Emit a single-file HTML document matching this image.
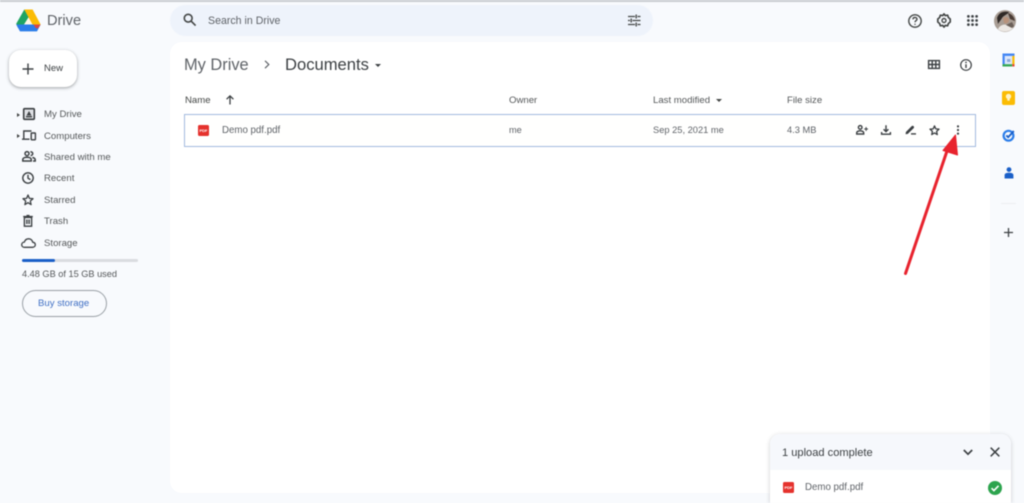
<!DOCTYPE html>
<html style="overflow:hidden;height:503px"><head><meta charset="utf-8"><style>
html,body{margin:0;padding:0}
body{width:1024px;height:503px;overflow:hidden;background:#f8fafd;position:relative;font-family:"Liberation Sans",sans-serif;color:#55585a}
#w{position:absolute;left:0;top:0;width:1024px;height:503px;overflow:hidden;filter:blur(.45px)}
.t{position:absolute;white-space:nowrap;line-height:14px;font-size:9.6px}
.a{position:absolute}
svg{position:absolute;overflow:visible}
</style></head><body><div id="w">
<div class="a" style="left:0;top:0;width:1024px;height:1.5px;background:#c9ccd0"></div>

<!-- logo -->
<svg style="left:16px;top:9px" width="25" height="23" viewBox="0 0 25 23">
<path d="M8.3 0.5 0.2 14.8 2 19 8 15.5 13 7.8Z" fill="#1fa463"/>
<path d="M8.3 0.5H16.6L24.6 15.5H16.4Z" fill="#fbbc04"/>
<path d="M0.2 15.5H24.6L21 22.4H4Z" fill="#2b7de9"/>
<path d="M17.5 15.5H24.6L22 19.5 19.6 19Z" fill="#ea4335" opacity=".9"/>
<path d="M12.4 8.5 16.2 15.2H8.4Z" fill="#fff8e6"/>
</svg>
<div class="t" style="left:47px;top:12px;font-size:14.6px;line-height:18px;color:#5f6368">Drive</div>

<!-- search -->
<div class="a" style="left:170px;top:5px;width:483px;height:31px;border-radius:16px;background:#eef3fb"></div>
<svg style="left:183px;top:13px" width="14" height="14" viewBox="0 0 14 14" fill="none" stroke="#444746" stroke-width="1.6"><circle cx="5.2" cy="5.2" r="3.9"/><path d="M8.2 8.2 12.6 12.6"/></svg>
<div class="t" style="left:208px;top:14px;font-size:10.6px;color:#5f6368">Search in Drive</div>
<svg style="left:627px;top:14px" width="14" height="13" viewBox="0 0 14 13" fill="none" stroke="#444746" stroke-width="1.3"><path d="M1 2.5H8M10.5 2.5H13.5M9.2 .5V4.5M1 6.5H3M5.5 6.5H13.5M4.2 4.5V8.5M1 10.5H8M10.5 10.5H13.5M9.2 8.5V12.5"/></svg>

<!-- top right -->
<svg style="left:908px;top:14px" width="14" height="14" viewBox="0 0 14 14" fill="none" stroke="#444746" stroke-width="1.4"><circle cx="7" cy="7" r="6.2"/><path d="M5 5.4C5 4 6 3.4 7 3.4S9 4.1 9 5.2C9 6.6 7 6.6 7 8.3"/><circle cx="7" cy="10.3" r=".7" fill="#444746" stroke="none"/></svg>
<svg style="left:937px;top:13px" width="14" height="15" viewBox="0 0 14 15" fill="none" stroke="#444746" stroke-width="1.7"><path d="M7 .9 8.3 2.6 10.6 2.2 11.4 4.5 13.2 6 13.2 9 11.4 10.5 10.6 12.8 8.3 12.4 7 14.1 5.7 12.4 3.4 12.8 2.6 10.5.8 9 .8 6 2.6 4.5 3.4 2.2 5.7 2.6Z" stroke-linejoin="round"/><circle cx="7" cy="7.5" r="2" stroke-width="1.4"/></svg>
<svg style="left:967px;top:15px" width="11" height="11" viewBox="0 0 11 11" fill="#3c4043"><circle cx="1.4" cy="1.4" r="1.35"/><circle cx="5.5" cy="1.4" r="1.35"/><circle cx="9.6" cy="1.4" r="1.35"/><circle cx="1.4" cy="5.5" r="1.35"/><circle cx="5.5" cy="5.5" r="1.35"/><circle cx="9.6" cy="5.5" r="1.35"/><circle cx="1.4" cy="9.6" r="1.35"/><circle cx="5.5" cy="9.6" r="1.35"/><circle cx="9.6" cy="9.6" r="1.35"/></svg>
<svg style="left:994px;top:10px" width="22" height="22" viewBox="0 0 22 22"><circle cx="11" cy="11" r="11" fill="#a89d94"/><path d="M3 8C5 2 10 1 15 2 13 5 10 5 8 8 7 10 5 12 4 14Z" fill="#2f2926"/><path d="M9 8C11 6 15 7 15 10 15 13 12 14 10 13Z" fill="#b8937c"/><path d="M14 3C17 4 20 6 21 11L16 9Z" fill="#4a3b34"/><path d="M4 19C6 15 10 14 13 15 17 16 19 18 19 18 16 22 8 23 4 19Z" fill="#ece8e4"/><path d="M12 15 18 12 20 16 18 18Z" fill="#6b6059"/></svg>

<!-- New -->
<div class="a" style="left:9px;top:50px;width:68px;height:37px;border-radius:12px;background:#fff;box-shadow:0 1px 2px rgba(60,64,67,.3),0 1px 3px 1px rgba(60,64,67,.15)"></div>
<svg style="left:22px;top:63px" width="12" height="12" viewBox="0 0 12 12" stroke="#3c4043" stroke-width="1.4"><path d="M6 .5V11.5M.5 6H11.5"/></svg>
<div class="t" style="left:44px;top:62px;font-size:9.5px;color:#3c4043">New</div>

<!-- nav -->
<div class="a" style="left:16.5px;top:113px;width:0;height:0;border-left:3px solid #444746;border-top:2.2px solid transparent;border-bottom:2.2px solid transparent"></div>
<div class="a" style="left:16.5px;top:134px;width:0;height:0;border-left:3px solid #444746;border-top:2.2px solid transparent;border-bottom:2.2px solid transparent"></div>
<svg style="left:23px;top:108px" width="12" height="12" viewBox="0 0 12 12"><rect x=".7" y=".7" width="10.6" height="10.6" rx="1" fill="#dfe1e5" stroke="#3c4043" stroke-width="1.6"/><path d="M6 3 8.5 7.5H3.5Z" fill="#3c4043"/><rect x="3" y="8" width="6" height="1.4" fill="#3c4043"/></svg>
<div class="t" style="left:44px;top:108px">My Drive</div>
<svg style="left:22px;top:130px" width="14" height="11" viewBox="0 0 14 11" fill="none" stroke="#3c4043" stroke-width="1.4"><path d="M1.8 8.5V1H9.5M0 9.2H7.5"/><rect x="9.2" y="3" width="4.2" height="6.8" rx=".5"/></svg>
<div class="t" style="left:44px;top:130px">Computers</div>
<svg style="left:22px;top:151px" width="14" height="11" viewBox="0 0 14 11" fill="none" stroke="#3c4043" stroke-width="1.5"><circle cx="5" cy="2.6" r="2"/><path d="M.8 10V8.6C.8 7 3 6.3 5 6.3S9.2 7 9.2 8.6V10H.8Z"/><path d="M8.4 .7C10 .7 10.7 1.7 10.7 2.6S10 4.5 8.6 4.6M10.4 6.5C12 6.8 13.2 7.5 13.2 8.8V10H11"/></svg>
<div class="t" style="left:44px;top:151px">Shared with me</div>
<svg style="left:22px;top:172px" width="12" height="12" viewBox="0 0 12 12" fill="none" stroke="#3c4043" stroke-width="1.4"><circle cx="6" cy="6" r="5.2"/><path d="M6 2.8V6.2L8.4 7.6"/></svg>
<div class="t" style="left:44px;top:172px">Recent</div>
<svg style="left:22px;top:194px" width="12" height="12" viewBox="0 0 12 12" fill="none" stroke="#3c4043" stroke-width="1.3"><path d="M6 1 7.4 4.4 11 4.7 8.3 7 9.1 10.6 6 8.7 2.9 10.6 3.7 7 1 4.7 4.6 4.4Z" stroke-linejoin="round"/></svg>
<div class="t" style="left:44px;top:194px">Starred</div>
<svg style="left:23px;top:215px" width="10" height="12" viewBox="0 0 10 12" fill="none" stroke="#3c4043" stroke-width="1.4"><path d="M1.4 2.4H8.6V11.2H1.4ZM.2 1.6H9.8M3.5.6H6.5M3.9 4.5V9M6.1 4.5V9"/></svg>
<div class="t" style="left:44px;top:215px">Trash</div>
<svg style="left:21px;top:238px" width="15" height="10" viewBox="0 0 15 10" fill="none" stroke="#3c4043" stroke-width="1.3"><path d="M3.6 9.3C1.8 9.3.7 8.1.7 6.7S1.8 4.2 3.3 4.1C4 2 5.6.8 7.6.8 9.8.8 11.3 2.3 11.7 4.2 13.2 4.4 14.3 5.4 14.3 6.8S13.1 9.3 11.6 9.3Z"/></svg>
<div class="t" style="left:44px;top:237px">Storage</div>
<div class="a" style="left:22px;top:259px;width:116px;height:2.5px;border-radius:2px;background:#dadce0"></div>
<div class="a" style="left:22px;top:259px;width:33px;height:2.5px;border-radius:2px;background:#1a5fc8"></div>
<div class="t" style="left:22px;top:267px;font-size:9.2px">4.48 GB of 15 GB used</div>
<div class="a" style="left:22px;top:290px;width:83px;height:25px;border:1px solid #9aa0a6;border-radius:14px"></div>
<div class="t" style="left:38px;top:297px;font-size:9.6px;color:#3f6fc4">Buy storage</div>

<!-- main -->
<div class="a" style="left:170px;top:42px;width:820px;height:451px;border-radius:12px;background:#fff"></div>
<div class="t" style="left:184px;top:55px;font-size:16.4px;line-height:20px;color:#5f6368">My Drive</div>
<svg style="left:264px;top:60px" width="6" height="9" viewBox="0 0 6 9" fill="none" stroke="#5f6368" stroke-width="1.2"><path d="M1 .8 4.8 4.5 1 8.2"/></svg>
<div class="t" style="left:285px;top:55px;font-size:16.6px;line-height:20px;color:#3c4043">Documents</div>
<div class="a" style="left:375px;top:64px;width:0;height:0;border-top:3px solid #3c4043;border-left:3.5px solid transparent;border-right:3.5px solid transparent"></div>
<svg style="left:928px;top:60px" width="12" height="9" viewBox="0 0 12 9" fill="none" stroke="#3c4043" stroke-width="1.4"><rect x=".6" y=".6" width="10.8" height="7.8"/><path d="M4.2.6V8.4M7.8.6V8.4M.6 4.5H11.4"/></svg>
<svg style="left:960px;top:59px" width="12" height="12" viewBox="0 0 12 12" fill="none" stroke="#3c4043" stroke-width="1.2"><circle cx="6" cy="6" r="5.3"/><path d="M6 5.2V9" stroke-width="1.4"/><circle cx="6" cy="3.4" r=".85" fill="#3c4043" stroke="none"/></svg>

<div class="t" style="left:185px;top:94px;color:#444746">Name</div>
<svg style="left:225px;top:95px" width="10" height="10" viewBox="0 0 10 10" fill="none" stroke="#3c4043" stroke-width="1.3"><path d="M5 9.5V1M1.6 4.2 5 .9 8.4 4.2"/></svg>
<div class="t" style="left:509px;top:94px">Owner</div>
<div class="t" style="left:653px;top:94px">Last modified</div>
<div class="a" style="left:716px;top:99px;width:0;height:0;border-top:3px solid #444746;border-left:3px solid transparent;border-right:3px solid transparent"></div>
<div class="t" style="left:787px;top:94px">File size</div>

<div class="a" style="left:184px;top:114px;width:790px;height:31px;border:1px solid #a3bade;background:#fffffe"></div>
<div class="a" style="left:198px;top:125px;width:11px;height:11px;border-radius:1.5px;background:#e5322d"></div>
<div class="t" style="left:198px;top:125px;width:11px;text-align:center;font-size:4px;line-height:11px;font-weight:bold;color:#fff">PDF</div>
<div class="t" style="left:222px;top:124px;font-size:9.7px;color:#5f6368">Demo pdf.pdf</div>
<div class="t" style="left:509px;top:123px;font-size:9.2px;color:#5f6368">me</div>
<div class="t" style="left:653px;top:123px;font-size:9.3px;color:#5f6368">Sep 25, 2021 me</div>
<div class="t" style="left:787px;top:123px;font-size:9.3px;color:#5f6368">4.3 MB</div>

<svg style="left:856px;top:125px" width="12" height="10" viewBox="0 0 12 10" fill="none" stroke="#3c4043" stroke-width="1.4"><circle cx="4.2" cy="2.4" r="1.8"/><path d="M.7 9V7.8C.7 6.5 2.6 5.8 4.2 5.8S7.7 6.5 7.7 7.8V9Z"/><path d="M8.2 4H12M10.1 2.1V5.9" stroke-width="1.1"/></svg>
<svg style="left:881px;top:125px" width="10" height="10" viewBox="0 0 10 10" fill="none" stroke="#3c4043" stroke-width="1.4"><path d="M5 .3V6.4M2.6 4.2 5 6.6 7.4 4.2M.6 7V9.2H9.4V7"/></svg>
<svg style="left:905px;top:125px" width="11" height="10" viewBox="0 0 11 10"><path d="M.6 9.2.9 7 6.6 1.2C7.2.6 8 .6 8.6 1.2S9.2 2.6 8.6 3.2L2.8 8.9Z" fill="#3c4043"/><rect x="6" y="8.2" width="5" height="1.4" fill="#3c4043"/></svg>
<svg style="left:929px;top:125px" width="11" height="11" viewBox="0 0 11 11" fill="none" stroke="#3c4043" stroke-width="1.3"><path d="M5.5.9 6.8 3.9 10 4.2 7.6 6.4 8.3 9.6 5.5 7.9 2.7 9.6 3.4 6.4 1 4.2 4.2 3.9Z" stroke-linejoin="round"/></svg>
<svg style="left:956px;top:125px" width="4" height="11" viewBox="0 0 4 11" fill="#3c4043"><circle cx="2" cy="1.4" r="1.1"/><circle cx="2" cy="5" r="1.1"/><circle cx="2" cy="8.6" r="1.1"/></svg>

<!-- arrow -->
<svg style="left:0;top:0" width="1024" height="503"><path d="M905.5 273.5 948 148" stroke="#e8232e" stroke-width="3" stroke-linecap="round" fill="none"/><path d="M955.5 135 957.5 155 943 150.5Z" fill="#e8232e" stroke="#e8232e" stroke-width="1" stroke-linejoin="round"/></svg>

<!-- right rail -->
<svg style="left:1002px;top:53px" width="13" height="14" viewBox="0 0 13 14"><rect x=".5" y=".5" width="12" height="13" rx="1" fill="#dce7fb"/><rect x=".5" y=".5" width="12" height="2.4" fill="#4285f4"/><rect x=".5" y="2.9" width="2.2" height="8.5" fill="#4285f4"/><rect x="10.3" y="2.9" width="2.2" height="8.5" fill="#fbbc04"/><rect x=".5" y="11.2" width="9.8" height="2.3" fill="#34a853"/><rect x="10.3" y="11.2" width="2.2" height="2.3" fill="#ea4335"/><rect x="5" y="6" width="3.4" height="3" fill="#8fa9d8"/></svg>
<div class="a" style="left:1002px;top:91px;width:13px;height:13.5px;border-radius:2px;background:#fbbc04"></div>
<svg style="left:1005px;top:93px" width="7" height="9" viewBox="0 0 7 9"><circle cx="3.5" cy="3.4" r="2.7" fill="#fff3c4"/><rect x="2.3" y="5.5" width="2.4" height="2.2" fill="#fff3c4"/></svg>
<svg style="left:1002px;top:129px" width="13" height="13" viewBox="0 0 13 13" fill="none"><circle cx="6.5" cy="6.7" r="4.9" stroke="#2b7de9" stroke-width="2.2"/><path d="M4.3 6.4 6.2 8.2 11.8 2" stroke="#1a5fc8" stroke-width="1.9"/></svg>
<svg style="left:1004px;top:167px" width="10" height="12" viewBox="0 0 10 12" fill="#1a5fc8"><circle cx="5" cy="2.6" r="2.4"/><path d="M.6 11.5V8C.6 6.5 2.5 5.8 5 5.8S9.4 6.5 9.4 8V11.5Z"/></svg>
<div class="a" style="left:1001px;top:203px;width:15px;height:1px;background:#eceef1"></div>
<svg style="left:1004px;top:228px" width="9" height="9" viewBox="0 0 9 9" stroke="#3c4043" stroke-width="1.3"><path d="M4.5 0V9M0 4.5H9"/></svg>

<!-- upload -->
<div class="a" style="left:770px;top:434px;width:241px;height:69px;border-radius:10px 10px 0 0;background:#fff;box-shadow:0 1px 4px rgba(60,64,67,.25);overflow:hidden"><div style="height:36px;background:#f6f8fc"></div></div>
<div class="t" style="left:782px;top:446px;font-size:11.1px;color:#3c4043">1 upload complete</div>
<svg style="left:963px;top:449px" width="10" height="7" viewBox="0 0 10 7" fill="none" stroke="#3c4043" stroke-width="1.7"><path d="M.8 1 5 5.2 9.2 1"/></svg>
<svg style="left:990px;top:447px" width="10" height="10" viewBox="0 0 10 10" fill="none" stroke="#3c4043" stroke-width="1.5"><path d="M.7.7 9.3 9.3M9.3.7.7 9.3"/></svg>
<div class="a" style="left:783px;top:482px;width:11px;height:11px;border-radius:1.5px;background:#e5322d"></div>
<div class="t" style="left:783px;top:482px;width:11px;text-align:center;font-size:4px;line-height:11px;font-weight:bold;color:#fff">PDF</div>
<div class="t" style="left:805px;top:481px;font-size:9.7px;color:#5f6368">Demo pdf.pdf</div>
<svg style="left:987.500px;top:480.500px" width="14" height="14" viewBox="0 0 13 13"><circle cx="6.5" cy="6.5" r="6.5" fill="#2da44e"/><path d="M3.3 6.7 5.5 8.9 9.8 4.5" fill="none" stroke="#fff" stroke-width="1.5"/></svg>
</div></body></html>
